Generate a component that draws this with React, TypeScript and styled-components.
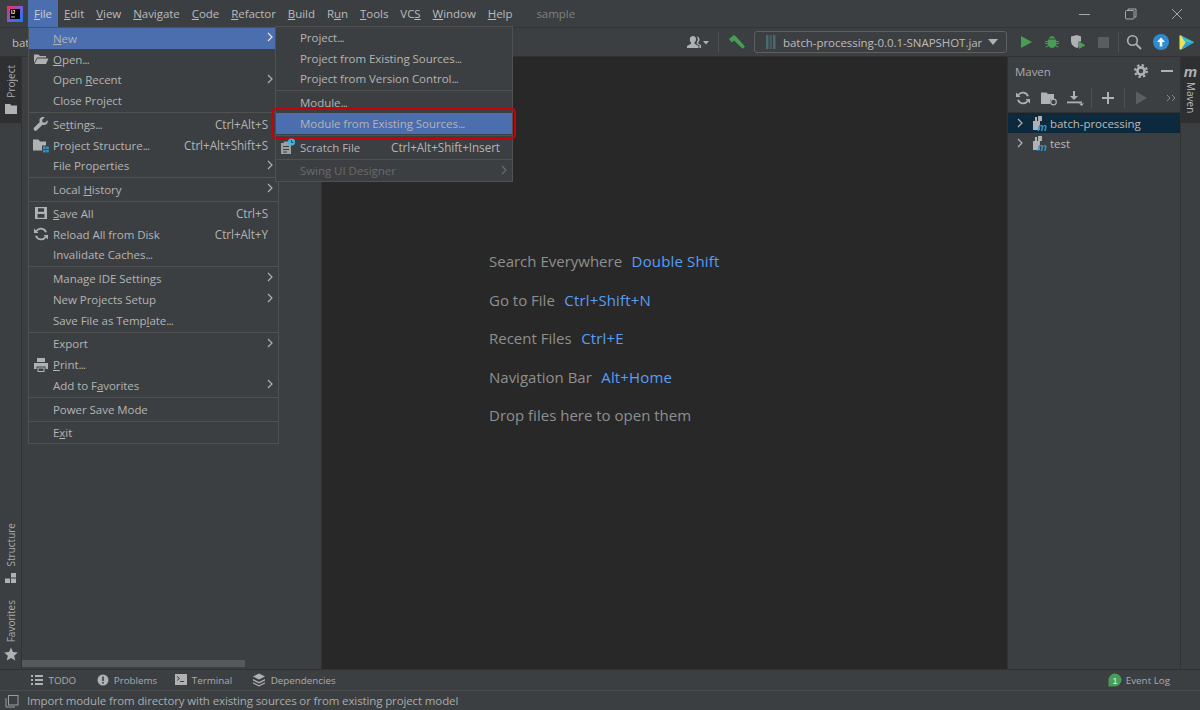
import React from "react";
import styled, { createGlobalStyle } from "styled-components";

const FONT = `"Open Sans", "Noto Sans", "Liberation Sans", sans-serif`;

type MenuRow = {
  label: string;
  shortcut?: string;
  arrow?: boolean;
  icon?: React.ReactNode;
  separator?: boolean;
  active?: boolean;
  disabled?: boolean;
  boxed?: boolean;
};

const GlobalStyle = createGlobalStyle`
  html, body {
    margin: 0;
    padding: 0;
    background: #3c3f41;
    overflow: hidden;
  }
`;

// "_" marks the letter that gets the mnemonic underline
const Label = ({ text }: { text: string }) => {
  const dotted = text.endsWith("...");
  const body = dotted ? text.slice(0, -3) : text;
  const i = body.indexOf("_");
  return (
    <>
      {i < 0 ? (
        body
      ) : (
        <>
          {body.slice(0, i)}
          <u>{body[i + 1]}</u>
          {body.slice(i + 2)}
        </>
      )}
      {dotted && <Dots>...</Dots>}
    </>
  );
};

const FolderOpenIcon = () => (
  <svg width="16" height="16" viewBox="0 0 16 16">
    <path d="M1 3.5h4.5L7 5h6v1.5H4L1 12z" fill="#afb1b3" />
    <path d="M4.3 7.5H15.5L13 13H1.6z" fill="#afb1b3" />
  </svg>
);

const WrenchIcon = () => (
  <svg width="16" height="16" viewBox="0 0 16 16">
    <path
      d="M14.6 4.2l-2.7 2.6-2.3-.6-.6-2.3L11.7 1.2C9.8.5 7.8 1 6.9 2.6c-.6 1.1-.6 2.4-.1 3.4L1.2 11.6c-.7.7-.7 1.9 0 2.7.8.8 2 .8 2.7 0l5.6-5.6c1.1.5 2.4.5 3.4-.1 1.6-.9 2.2-2.6 1.7-4.4z"
      fill="#afb1b3"
    />
  </svg>
);

const StructureFolderIcon = () => (
  <svg width="16" height="16" viewBox="0 0 16 16">
    <path d="M0 2.5h5.5L7 4.5h6v4H9v5H0z" fill="#afb1b3" />
    <rect x="10" y="9.5" width="2.6" height="2.6" fill="#3592c4" />
    <rect x="13.2" y="9.5" width="2.6" height="2.6" fill="#3592c4" />
    <rect x="10" y="12.8" width="2.6" height="2.6" fill="#3592c4" />
    <rect x="13.2" y="12.8" width="2.6" height="2.6" fill="#3592c4" />
  </svg>
);

const SaveIcon = () => (
  <svg width="16" height="16" viewBox="0 0 16 16">
    <path fillRule="evenodd" d="M2 2h12v12H2zM5 3.2v3.6h6V3.2zM4.5 9v3.8h7V9z" fill="#afb1b3" />
  </svg>
);

const RefreshIcon = ({ color = "#afb1b3" }: { color?: string }) => (
  <svg width="16" height="16" viewBox="0 0 16 16" fill="none">
    <path d="M13 6.2A5.4 5.4 0 0 0 3.4 5" stroke={color} strokeWidth="1.8" />
    <path d="M3 9.8A5.4 5.4 0 0 0 12.6 11" stroke={color} strokeWidth="1.8" />
    <path d="M1 2.5V7h4.5z" fill={color} />
    <path d="M15 13.5V9h-4.5z" fill={color} />
  </svg>
);

const PrintIcon = () => (
  <svg width="16" height="16" viewBox="0 0 16 16">
    <path
      fillRule="evenodd"
      d="M4 1h8v4H4zM1 6h14v6h-2.5v-2.5h-9V12H1zM4.5 10.5h7V15h-7zM5.5 11.5v2.5h5v-2.5z"
      fill="#afb1b3"
    />
  </svg>
);

const ScratchIcon = () => (
  <svg width="18" height="18" viewBox="0 0 18 18">
    <path
      fillRule="evenodd"
      d="M2 5h3V3.5h4V5h3v11H2zM4 8v1h6V8zM4 11v1h6v-1zM4 13.5v1h4v-1z"
      fill="#9da0a2"
    />
    <circle cx="12.5" cy="4" r="3.6" fill="#40b6e0" />
    <path d="M12.5 2v2.4h2" stroke="#2b4a5a" strokeWidth="1" fill="none" />
  </svg>
);

const Chevron = ({ color = "#afb1b3" }: { color?: string }) => (
  <svg width="8" height="10" viewBox="0 0 8 10" fill="none">
    <path d="M2 1l4 4-4 4" stroke={color} strokeWidth="1.2" />
  </svg>
);

const AppLogo = () => (
  <svg width="16" height="16" viewBox="0 0 16 16">
    <defs>
      <linearGradient id="ij" x1="0" y1="0" x2="1" y2="1">
        <stop offset="0" stopColor="#fe2857" />
        <stop offset="0.5" stopColor="#7a5cd6" />
        <stop offset="1" stopColor="#087cfa" />
      </linearGradient>
    </defs>
    <rect width="16" height="16" fill="url(#ij)" />
    <rect x="3" y="3" width="10" height="10" fill="#000" />
    <text x="4" y="8.4" fontSize="5" fontWeight="700" fill="#fff" fontFamily="Liberation Sans">
      IJ
    </text>
    <rect x="4" y="10.6" width="4" height="0.8" fill="#fff" />
  </svg>
);

const JarIcon = () => (
  <svg width="10" height="16" viewBox="0 0 10 16">
    <rect x="0" y="1" width="2.5" height="14" fill="#4a6a72" />
    <rect x="3.5" y="1" width="2.5" height="14" fill="#3f5a62" />
    <rect x="7" y="1" width="2.5" height="14" fill="#4a6a72" />
  </svg>
);

const ModuleIcon = () => (
  <svg width="15" height="16" viewBox="0 0 15 16">
    <path d="M1 6h2V2h2v4h1V1h4v5H8v9H1z" fill="#afb1b3" />
    <text x="5.2" y="15.5" fontSize="11" fontStyle="italic" fontWeight="700" fill="#3592c4" fontFamily="Liberation Sans">
      m
    </text>
  </svg>
);

const fileRows: MenuRow[] = [
  { label: "_New", arrow: true, active: true },
  { label: "_Open...", icon: <FolderOpenIcon /> },
  { label: "Open _Recent", arrow: true },
  { label: "Close Project", separator: true },
  { label: "Se_ttings...", shortcut: "Ctrl+Alt+S", icon: <WrenchIcon /> },
  { label: "Project Structure...", shortcut: "Ctrl+Alt+Shift+S", icon: <StructureFolderIcon /> },
  { label: "File Properties", arrow: true, separator: true },
  { label: "Local _History", arrow: true, separator: true },
  { label: "_Save All", shortcut: "Ctrl+S", icon: <SaveIcon /> },
  { label: "Reload All from Disk", shortcut: "Ctrl+Alt+Y", icon: <RefreshIcon /> },
  { label: "Invalidate Caches...", separator: true },
  { label: "Manage IDE Settings", arrow: true },
  { label: "New Projects Setup", arrow: true },
  { label: "Save File as Temp_late...", separator: true },
  { label: "Export", arrow: true },
  { label: "_Print...", icon: <PrintIcon /> },
  { label: "Add to F_avorites", arrow: true, separator: true },
  { label: "Power Save Mode", separator: true },
  { label: "E_xit" },
];

const newRows: MenuRow[] = [
  { label: "Project..." },
  { label: "Project from Existing Sources..." },
  { label: "Project from Version Control...", separator: true },
  { label: "Module..." },
  { label: "Module from Existing Sources...", active: true, boxed: true, separator: true },
  { label: "Scratch File", shortcut: "Ctrl+Alt+Shift+Insert", icon: <ScratchIcon />, separator: true },
  { label: "Swing UI Designer", arrow: true, disabled: true },
];

const menuBarItems = ["_File", "_Edit", "_View", "_Navigate", "_Code", "_Refactor", "_Build", "R_un", "_Tools", "VC_S", "_Window", "_Help"];

const hints = [
  { text: "Search Everywhere", key: "Double Shift" },
  { text: "Go to File", key: "Ctrl+Shift+N" },
  { text: "Recent Files", key: "Ctrl+E" },
  { text: "Navigation Bar", key: "Alt+Home" },
  { text: "Drop files here to open them" },
];

const MenuRows = ({ rows, compact }: { rows: MenuRow[]; compact?: boolean }) => (
  <>
    {rows.map((row) => (
      <React.Fragment key={row.label}>
        <Row $active={row.active} $disabled={row.disabled} $compact={compact}>
          <RowIcon>{row.icon}</RowIcon>
          <RowText>
            <Label text={row.label} />
          </RowText>
          {row.shortcut && <Shortcut>{row.shortcut}</Shortcut>}
          {row.arrow && (
            <RowArrow>
              <Chevron color={row.disabled ? "#6a6a6a" : row.active ? "#e6e6e6" : "#afb1b3"} />
            </RowArrow>
          )}
          {row.boxed && <RedBox />}
        </Row>
        {row.separator && <Separator />}
      </React.Fragment>
    ))}
  </>
);

const App = () => {
  return (
    <Frame>
      <GlobalStyle />
      <TitleBar>
        <LogoSlot>
          <AppLogo />
        </LogoSlot>
        {menuBarItems.map((item, i) => (
          <MenuBarItem key={item} $open={i === 0}>
            <Label text={item} />
          </MenuBarItem>
        ))}
        <ProjectName>sample</ProjectName>
        <WindowButtons>
          <WindowButton>
            <svg width="12" height="12" viewBox="0 0 12 12">
              <path d="M0 6.5h11" stroke="#a8a8a8" strokeWidth="1" />
            </svg>
          </WindowButton>
          <WindowButton>
            <svg width="12" height="12" viewBox="0 0 12 12" fill="none">
              <path d="M3 2.5V1h8v8H9.5" stroke="#a8a8a8" />
              <rect x="0.5" y="2.5" width="8.5" height="8.5" rx="1" stroke="#a8a8a8" />
            </svg>
          </WindowButton>
          <WindowButton>
            <svg width="12" height="12" viewBox="0 0 12 12">
              <path d="M1 1l10 10M11 1L1 11" stroke="#a8a8a8" strokeWidth="1" />
            </svg>
          </WindowButton>
        </WindowButtons>
      </TitleBar>

      <MainToolbar>
        <Crumb>bat</Crumb>
        <ToolGroup>
          <ToolSlot $w={32}>
            <svg width="24" height="16" viewBox="0 0 24 16">
              <path
                d="M7 2c2 0 3 1.3 3 3.2 0 1.5-.7 2.6-1.5 3.2v1.3L12.5 12v2H1v-2l4-2.3V8.4C4.2 7.8 3.8 6.7 3.8 5.2 3.8 3.3 5 2 7 2z"
                fill="#afb1b3"
              />
              <path d="M10.5 2.5c1.7 0 3 1 3 3 0 1.3-.6 2.3-1.3 2.9v1.2l2.8 1.7V14h-1.5v-2.5L10.8 10V8c.8-.7 1-1.8 1-2.8 0-1-.4-2-1.3-2.7z" fill="#afb1b3" />
              <path d="M17 7h6l-3 3.5z" fill="#afb1b3" />
            </svg>
          </ToolSlot>
          <ToolDivider $gap={4} />
          <ToolSlot $w={28}>
            <svg width="18" height="18" viewBox="0 0 18 18">
              <path d="M1 6l5-4 2 1.5 9 10-2.3 2.3L6 7.5 3.8 9.5z" fill="#499c54" />
            </svg>
          </ToolSlot>
          <RunConfig>
            <JarIcon />
            <RunConfigText>batch-processing-0.0.1-SNAPSHOT.jar</RunConfigText>
            <svg width="10" height="6" viewBox="0 0 10 6">
              <path d="M0 0h10L5 6z" fill="#afb1b3" />
            </svg>
          </RunConfig>
          <ToolSlot $w={26} $ml={6}>
            <svg width="14" height="14" viewBox="0 0 14 14">
              <path d="M2 1l11 6-11 6z" fill="#499c54" />
            </svg>
          </ToolSlot>
          <ToolSlot $w={26}>
            <svg width="16" height="16" viewBox="0 0 16 16">
              <path
                d="M5 4.5C5.3 3 6.5 2.2 8 2.2s2.7.8 3 2.3zM4.3 5.5h7.4c.3.5.4 1 .5 1.5H15v1h-2.8v1H15v1h-2.8c0 .4-.2.8-.3 1.2l2.6 1.3-.5.9-2.6-1.3C10.4 13.5 9.3 14 8 14s-2.4-.5-3.4-1.9L2 13.4l-.5-.9 2.6-1.3c-.1-.4-.3-.8-.3-1.2H1V9h2.8V8H1V7h2.8c.1-.5.2-1 .5-1.500z"
                fill="#499c54"
              />
            </svg>
          </ToolSlot>
          <ToolSlot $w={25}>
            <svg width="18" height="16" viewBox="0 0 18 16">
              <path d="M2 2.5L8 1l4 1.5v5H9.5V13L8 14c-3-1.2-6-3-6-7z" fill="#afb1b3" />
              <path d="M10 7.5l6.5 3.800L10 15z" fill="#499c54" />
            </svg>
          </ToolSlot>
          <ToolSlot $w={26}>
            <StopSquare />
          </ToolSlot>
          <ToolDivider $gap={1.5} />
          <ToolSlot $w={28}>
            <svg width="16" height="16" viewBox="0 0 16 16" fill="none">
              <circle cx="6.5" cy="6.5" r="4.8" stroke="#afb1b3" strokeWidth="1.6" />
              <path d="M10 10l5 5" stroke="#afb1b3" strokeWidth="1.8" />
            </svg>
          </ToolSlot>
          <ToolSlot $w={26}>
            <svg width="16" height="16" viewBox="0 0 16 16">
              <circle cx="8" cy="8" r="8" fill="#2f8bd0" />
              <path d="M8 3.5L12 8H9.3v4.5H6.7V8H4z" fill="#f2f6fa" />
            </svg>
          </ToolSlot>
          <ToolSlot $w={26}>
            <svg width="16" height="17" viewBox="0 0 16 17">
              <path d="M2 1.5C1 1 .5 1.5.5 2.5v12c0 1 .5 1.5 1.5 1L7 13V5z" fill="#e8e25a" />
              <path d="M2 1.5L15 8 7 9.5z" fill="#2fb8e0" />
              <path d="M7 5l8 3.5L7 13z" fill="#3ecf8e" />
              <path d="M2 15.5L15 8.5 7 8z" fill="#2f9be0" />
            </svg>
          </ToolSlot>
        </ToolGroup>
      </MainToolbar>

      <Body>
        <LeftStripe>
          <StripeTab $active>
            <VerticalLabel>Project</VerticalLabel>
            <svg width="14" height="12" viewBox="0 0 14 12">
              <path d="M1 1h5l1.5 1.5H13V11H1z" fill="#afb1b3" />
            </svg>
          </StripeTab>
          <StripeSpacer />
          <StripeTab>
            <VerticalLabel>Structure</VerticalLabel>
            <svg width="14" height="12" viewBox="0 0 14 12">
              <path d="M7 1h5v4.5H7zM1 6.5h5V11H1zM7 6.5h5V11H7z" fill="#afb1b3" />
            </svg>
          </StripeTab>
          <StripeTab>
            <VerticalLabel>Favorites</VerticalLabel>
            <svg width="14" height="14" viewBox="0 0 14 14">
              <path d="M7 0.5l2 4.5 4.8.5-3.600 3.200 1 4.800L7 11l-4.200 2.500 1-4.800L.2 5.500 5 5z" fill="#afb1b3" />
            </svg>
          </StripeTab>
        </LeftStripe>
        <ProjectPanel>
          <PanelScrollbar />
        </ProjectPanel>
        <Editor>
          {hints.map((hint) => (
            <HintLine key={hint.text}>
              {hint.text}
              {hint.key && <HintKey>{hint.key}</HintKey>}
            </HintLine>
          ))}
        </Editor>
        <MavenPanel>
          <MavenHeader>
            <MavenTitle>Maven</MavenTitle>
            <svg width="16" height="16" viewBox="0 0 16 16" fill="none">
              <circle cx="8" cy="8" r="3.6" stroke="#afb1b3" strokeWidth="2.6" />
              <circle cx="8" cy="8" r="5.9" stroke="#afb1b3" strokeWidth="2.2" strokeDasharray="2.3 2.33" />
            </svg>
            <MinusSlot>
              <svg width="12" height="2" viewBox="0 0 12 2">
                <rect width="12" height="2" fill="#afb1b3" />
              </svg>
            </MinusSlot>
          </MavenHeader>
          <MavenTools>
            <ToolSlot $w={26}>
              <RefreshIcon />
            </ToolSlot>
            <ToolSlot $w={26}>
              <svg width="18" height="16" viewBox="0 0 18 16">
                <path d="M1 2.5h5.5L8 4h6v5.5h-4V14H1z" fill="#afb1b3" />
                <circle cx="13.5" cy="12" r="2.8" fill="none" stroke="#afb1b3" strokeWidth="1.2" />
              </svg>
            </ToolSlot>
            <ToolSlot $w={27}>
              <svg width="20" height="16" viewBox="0 0 20 16">
                <path d="M7 1h2v5h3l-4 4-4-4h3z" fill="#afb1b3" />
                <rect x="1" y="11.5" width="15" height="1.8" fill="#afb1b3" />
                <path d="M13 13.5h5l-2.5 2.5z" fill="#afb1b3" />
              </svg>
            </ToolSlot>
            <ToolDivider $gap={2} />
            <ToolSlot $w={28}>
              <svg width="12" height="12" viewBox="0 0 12 12">
                <path d="M5 0h2v5h5v2H7v5H5V7H0V5h5z" fill="#afb1b3" />
              </svg>
            </ToolSlot>
            <ToolDivider $gap={2} />
            <ToolSlot $w={28}>
              <svg width="14" height="14" viewBox="0 0 14 14">
                <path d="M2 0.5l11 6.5-11 6.5z" fill="#5c5f61" />
              </svg>
            </ToolSlot>
            <MoreChevrons>
              <svg width="10" height="8" viewBox="0 0 10 8" fill="none">
                <path d="M1 1l3 3-3 3M6 1l3 3-3 3" stroke="#8a8d8f" />
              </svg>
            </MoreChevrons>
          </MavenTools>
          <TreeRow $selected>
            <Chevron />
            <ModuleIcon />
            batch-processing
          </TreeRow>
          <TreeRow>
            <Chevron />
            <ModuleIcon />
            test
          </TreeRow>
        </MavenPanel>
        <RightStripe>
          <MavenStripeTab>
            <MavenMark>m</MavenMark>
            <MavenVertical>Maven</MavenVertical>
          </MavenStripeTab>
        </RightStripe>
      </Body>

      <ToolTabs>
        <ToolTab $left={19}>
          <svg width="14" height="12" viewBox="0 0 14 12">
            <path d="M1 1h2v2H1zM5 1h8v2H5zM1 5h2v2H1zM5 5h8v2H5zM1 9h2v2H1zM5 9h8v2H5z" fill="#afb1b3" />
          </svg>
          TODO
        </ToolTab>
        <ToolTab $left={21}>
          <svg width="12" height="12" viewBox="0 0 12 12">
            <circle cx="6" cy="6" r="5.5" fill="#afb1b3" />
            <rect x="5.2" y="2.5" width="1.6" height="4.5" fill="#3c3f41" />
            <rect x="5.2" y="8" width="1.6" height="1.6" fill="#3c3f41" />
          </svg>
          Problems
        </ToolTab>
        <ToolTab $left={18}>
          <svg width="12" height="12" viewBox="0 0 12 12">
            <rect width="12" height="11" fill="#afb1b3" />
            <path d="M2 2.5l2.5 2-2.5 2" stroke="#3c3f41" fill="none" />
            <rect x="5" y="7" width="4" height="1" fill="#3c3f41" />
          </svg>
          Terminal
        </ToolTab>
        <ToolTab $left={20}>
          <svg width="14" height="14" viewBox="0 0 14 14">
            <path d="M7 0.5l6 3-6 3-6-3z" fill="#afb1b3" />
            <path d="M1 6l6 3 6-3v1.5l-6 3-6-3zM1 9.2l6 3 6-3v1.3l-6 3-6-3z" fill="#afb1b3" />
          </svg>
          Dependencies
        </ToolTab>
        <EventLog>
          <svg width="14" height="14" viewBox="0 0 14 14">
            <path d="M7 0.5a6.5 6.5 0 1 1 0 13H.5V7A6.5 6.5 0 0 1 7 .5z" fill="#499c54" />
            <text x="7" y="10.5" fontSize="9" textAnchor="middle" fill="#e8f3ea" fontFamily="Liberation Sans">
              1
            </text>
          </svg>
          Event Log
        </EventLog>
      </ToolTabs>

      <StatusBar>
        <svg width="14" height="14" viewBox="0 0 14 14" fill="none">
          <rect x="3.5" y="1.5" width="9.5" height="9.5" stroke="#9a9d9f" />
          <path d="M1 4v9h9" stroke="#9a9d9f" />
        </svg>
        Import module from directory with existing sources or from existing project model
      </StatusBar>

      <FileMenu>
        <MenuRows rows={fileRows} />
      </FileMenu>
      <NewMenu>
        <MenuRows rows={newRows} compact />
      </NewMenu>
    </Frame>
  );
};

export default App;

const Dots = styled.span`
  letter-spacing: -0.8px;
`;

const Frame = styled.div`
  position: relative;
  display: flex;
  flex-direction: column;
  width: 1200px;
  height: 710px;
  overflow: hidden;
  background: #3c3f41;
  color: #bbbbbb;
  font-family: ${FONT};
  font-size: 11.5px;
  letter-spacing: -0.05px;
`;

const TitleBar = styled.div`
  display: flex;
  align-items: stretch;
  height: 28px;
  flex: none;
  border-bottom: 1px solid #333537;
  box-sizing: border-box;
`;

const LogoSlot = styled.div`
  display: flex;
  align-items: center;
  width: 28px;
  padding-left: 7px;
  box-sizing: border-box;
`;

const MenuBarItem = styled.div<{ $open?: boolean }>`
  display: flex;
  align-items: center;
  padding: 0 6px;
  white-space: pre;
  background: ${(p) => (p.$open ? "#4b6eaf" : "transparent")};
  color: ${(p) => (p.$open ? "#c8cdd6" : "#bbbbbb")};
`;

const ProjectName = styled.div`
  display: flex;
  align-items: center;
  margin-left: 18px;
  color: #808080;
`;

const WindowButtons = styled.div`
  display: flex;
  margin-left: auto;
`;

const WindowButton = styled.div`
  display: flex;
  align-items: center;
  justify-content: center;
  width: 46px;
`;

const MainToolbar = styled.div`
  display: flex;
  align-items: center;
  height: 29px;
  flex: none;
  padding-left: 12px;
  box-sizing: border-box;
  border-bottom: 1px solid #323232;
`;

const Crumb = styled.div`
  white-space: nowrap;
`;

const ToolGroup = styled.div`
  display: flex;
  align-items: center;
  margin-left: auto;
`;

const ToolSlot = styled.div<{ $w: number; $ml?: number }>`
  display: flex;
  align-items: center;
  justify-content: center;
  width: ${(p) => p.$w}px;
  height: 20px;
  margin-left: ${(p) => p.$ml ?? 0}px;
`;

const ToolDivider = styled.div<{ $gap: number }>`
  width: 1px;
  height: 20px;
  margin: 0 ${(p) => p.$gap}px;
  background: #515151;
`;

const RunConfig = styled.div`
  display: flex;
  align-items: center;
  width: 253px;
  height: 22px;
  box-sizing: border-box;
  margin-left: 3px;
  padding: 0 8px 0 11px;
  border: 1px solid #5e6060;
  border-radius: 3px;
  background: #3c3f41;
`;

const RunConfigText = styled.div`
  flex: 1;
  margin-left: 7px;
  white-space: nowrap;
`;

const StopSquare = styled.div`
  width: 11px;
  height: 11px;
  background: #5a5d5f;
`;

const Body = styled.div`
  display: flex;
  flex: 1;
  min-height: 0;
`;

const LeftStripe = styled.div`
  display: flex;
  flex-direction: column;
  align-items: stretch;
  width: 22px;
  flex: none;
  box-sizing: border-box;
  border-right: 1px solid #323232;
`;

const StripeSpacer = styled.div`
  flex: 1;
`;

const StripeTab = styled.div<{ $active?: boolean }>`
  display: flex;
  flex-direction: column;
  align-items: center;
  gap: 5px;
  padding: 8px 0;
  background: ${(p) => (p.$active ? "#2d2f30" : "transparent")};
`;

const VerticalLabel = styled.div`
  writing-mode: vertical-rl;
  transform: rotate(180deg);
  font-size: 10px;
  letter-spacing: 0;
  color: #a9abad;
`;

const ProjectPanel = styled.div`
  display: flex;
  align-items: flex-end;
  width: 299px;
  flex: none;
  box-sizing: border-box;
  padding-bottom: 2px;
`;

const PanelScrollbar = styled.div`
  width: 223px;
  height: 7px;
  background: #565859;
`;

const Editor = styled.div`
  flex: 1;
  padding: 193px 0 0 167px;
  box-sizing: border-box;
  background: #282828;
  border-left: 1px solid #323232;
  border-right: 1px solid #323232;
`;

const HintLine = styled.div`
  height: 38.5px;
  font-size: 15px;
  line-height: 22px;
  letter-spacing: 0;
  color: #8f8f8f;
`;

const HintKey = styled.span`
  margin-left: 9.5px;
  letter-spacing: 0.15px;
  color: #589df6;
`;

const MavenPanel = styled.div`
  display: flex;
  flex-direction: column;
  width: 172px;
  flex: none;
`;

const MavenHeader = styled.div`
  display: flex;
  align-items: center;
  height: 28px;
  padding: 0 5px 0 7px;
  svg:first-of-type {
    margin-right: 2px;
  }
`;

const MavenTitle = styled.div`
  flex: 1;
  color: #a9abad;
`;

const MinusSlot = styled.div`
  display: flex;
  margin-left: 10px;
`;

const MavenTools = styled.div`
  display: flex;
  align-items: center;
  height: 28px;
  padding: 0 0 2px 2px;
  box-sizing: border-box;
  border-bottom: 1px solid #323232;
`;

const MoreChevrons = styled.div`
  display: flex;
  margin-left: auto;
  padding-right: 4px;
`;

const TreeRow = styled.div<{ $selected?: boolean }>`
  display: flex;
  align-items: center;
  height: 20px;
  gap: 3px;
  padding-left: 8px;
  background: ${(p) => (p.$selected ? "#0d293e" : "transparent")};
  svg:first-child {
    margin-right: 5px;
  }
`;

const RightStripe = styled.div`
  width: 19px;
  flex: none;
  border-left: 1px solid #323232;
`;

const MavenStripeTab = styled.div`
  display: flex;
  flex-direction: column;
  align-items: center;
  height: 66px;
  padding-top: 8px;
  box-sizing: border-box;
  background: #2d2f30;
`;

const MavenMark = styled.div`
  font-family: "Liberation Sans", sans-serif;
  font-size: 15px;
  line-height: 14px;
  font-style: italic;
  font-weight: 700;
  color: #afb1b3;
`;

const MavenVertical = styled.div`
  margin-top: 3px;
  writing-mode: vertical-rl;
  font-size: 10px;
  letter-spacing: 0;
  color: #bbbbbb;
`;

const ToolTabs = styled.div`
  display: flex;
  align-items: center;
  height: 22px;
  flex: none;
  box-sizing: border-box;
  padding: 0 30px 0 11px;
  border-top: 1px solid #323232;
  border-bottom: 1px solid #484a4c;
  font-size: 9.8px;
  letter-spacing: 0;
  color: #a9abad;
`;

const ToolTab = styled.div<{ $left: number }>`
  display: flex;
  align-items: center;
  gap: 4.5px;
  margin-left: ${(p) => p.$left}px;
`;

const EventLog = styled.div`
  display: flex;
  align-items: center;
  gap: 4px;
  margin-left: auto;
`;

const StatusBar = styled.div`
  display: flex;
  align-items: center;
  height: 19px;
  flex: none;
  gap: 8px;
  padding-left: 5px;
  letter-spacing: -0.12px;
  color: #a9abad;
`;

const FileMenu = styled.div`
  position: absolute;
  top: 27px;
  left: 28px;
  width: 251px;
  box-sizing: border-box;
  background: #3c3f41;
  border: 1px solid #515151;
`;

const NewMenu = styled.div`
  position: absolute;
  top: 26px;
  left: 275px;
  width: 238px;
  box-sizing: border-box;
  background: #3c3f41;
  border: 1px solid #515151;
`;

const Row = styled.div<{ $active?: boolean; $disabled?: boolean; $compact?: boolean }>`
  position: relative;
  display: flex;
  align-items: center;
  height: 20.75px;
  padding-right: ${(p) => (p.$compact ? "12px" : "10px")};
  background: ${(p) => (p.$active ? "#4b6eaf" : "transparent")};
  color: ${(p) => (p.$disabled ? "#6a6a6a" : "#b4b4b4")};
  white-space: pre;
`;

const RowIcon = styled.div`
  display: flex;
  align-items: center;
  justify-content: center;
  width: 24px;
  flex: none;
`;

const RowText = styled.div`
  flex: 1;
`;

const Shortcut = styled.div`
  font-size: 11.7px;
  color: #b4b4b4;
`;

const RowArrow = styled.div`
  position: absolute;
  right: 4px;
  top: 4px;
  display: flex;
`;

const Separator = styled.div`
  height: 1px;
  margin: 1px 0;
  background: #515151;
`;

const RedBox = styled.div`
  position: absolute;
  top: -5px;
  bottom: -5px;
  left: -4px;
  right: -4px;
  border: 2px solid #c8000a;
  border-radius: 4px;
`;
